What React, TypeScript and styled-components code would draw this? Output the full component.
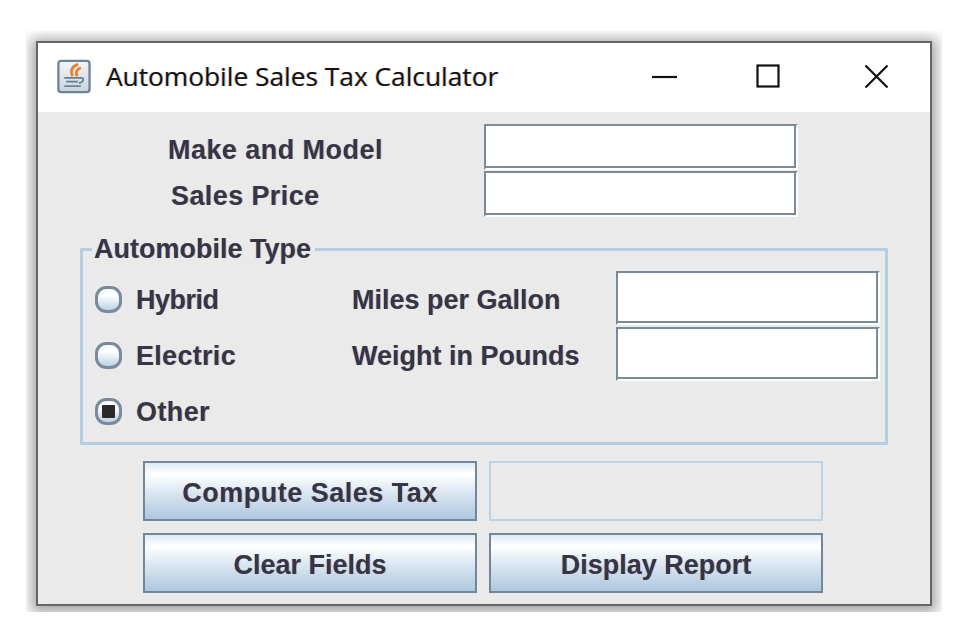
import React from 'react'
import styled, { createGlobalStyle } from 'styled-components'

const GlobalStyle = createGlobalStyle`
  html, body {
    margin: 0;
    padding: 0;
    background: #fff;
  }
`

const fringe = '-0.8px 0 rgba(230, 130, 30, 0.35), 0.8px 0 rgba(40, 90, 200, 0.35)'

const ShadowFrame = styled.div`
  box-sizing: border-box;
  width: 916px;
  height: 581px;
  margin: 31px 0 0 26px;
  padding: 10px 10px 7px 10px;
  overflow: hidden;
  background: #fff;
`

const Window = styled.div`
  box-sizing: border-box;
  width: 896px;
  height: 565px;
  display: flex;
  flex-direction: column;
  border: 2px solid #666;
  background: #eaeaea;
  box-shadow: 0 2px 12px 5px rgba(0, 0, 0, 0.34);
  font-family: 'Liberation Sans', Arial, sans-serif;
`

const TitleBar = styled.div`
  height: 69px;
  flex: none;
  display: flex;
  align-items: center;
  padding: 0 0 3px 19px;
  box-sizing: border-box;
  background: #fff;
`

const TitleText = styled.div`
  margin-left: 15px;
  width: 517px;
  font-family: 'Open Sans', sans-serif;
  font-size: 26.3px;
  color: #111;
  text-shadow: ${fringe};
  white-space: nowrap;
`

const Controls = styled.div`
  display: flex;
  margin-left: 26px;
`

const ControlButton = styled.div`
  width: 108px;
  height: 66px;
  display: flex;
  align-items: center;
  justify-content: center;
`

const Content = styled.div`
  flex: 1;
  display: flex;
  flex-direction: column;
  filter: blur(0.5px);
`

const TopForm = styled.div`
  display: grid;
  grid-template-columns: 316px 314px;
  grid-auto-rows: 46px;
  gap: 1px 0;
  padding: 12px 0 0 130px;
`

const Label = styled.label<{ $indent?: number; $spacing?: number; $drop?: number }>`
  display: flex;
  align-items: center;
  padding-left: ${props => props.$indent || 0}px;
  padding-top: ${props => props.$drop || 0}px;
  font-size: 27px;
  font-weight: 700;
  letter-spacing: ${props => props.$spacing || 0}px;
  color: #353545;
  text-shadow: ${fringe};
  white-space: nowrap;
`

const TextField = styled.input`
  box-sizing: border-box;
  width: 100%;
  height: 100%;
  margin: 0;
  padding: 0;
  outline: none;
  background: #fff;
  border-style: solid;
  border-width: 2px;
  border-color: #7a8a99 #fff #fff #7a8a99;
  box-shadow: inset -2px -2px 0 #7a8a99;
`

const Group = styled.fieldset`
  box-sizing: border-box;
  width: 808px;
  height: 211px;
  margin: 17px 0 0 42px;
  padding: 6px 0 0 12px;
  border: 3px solid #b3cde3;
  min-inline-size: auto;
`

const GroupLegend = styled.legend`
  margin-left: -3px;
  padding: 0 4px 0 2px;
  font-size: 27px;
  font-weight: 700;
  color: #353545;
  text-shadow: ${fringe};
  white-space: nowrap;
`

const GroupGrid = styled.div`
  display: grid;
  grid-template-columns: 257px 264px 264px;
  grid-auto-rows: 56px;
`

const RadioRow = styled.div`
  display: flex;
  align-items: center;
  gap: 14px;
`

const Radio = styled.span<{ $checked?: boolean }>`
  box-sizing: border-box;
  width: 27px;
  height: 27px;
  display: flex;
  align-items: center;
  justify-content: center;
  border: 3px solid #7a8a99;
  border-radius: 42%;
  background: linear-gradient(#f2f7fb, #fff 30%, #bcd2e5);
  &::after {
    content: '';
    display: ${props => (props.$checked ? 'block' : 'none')};
    width: 13px;
    height: 13px;
    background: #2a2a2a;
    border-radius: 1px;
  }
`

const FieldCell = styled.div`
  padding-bottom: 2px;
`

const ButtonGrid = styled.div`
  display: grid;
  grid-template-columns: 334px 334px;
  grid-auto-rows: 60px;
  gap: 12px;
  margin: 16px 0 0 105px;
`

const ActionButton = styled.button<{ $spacing?: number }>`
  margin: 0;
  padding: 4px 0 0;
  border: 2.5px solid #72879b;
  background: linear-gradient(#dfeaf3, #fff 20%, #d8e5f0 55%, #aec7de);
  font-family: 'Liberation Sans', Arial, sans-serif;
  font-size: 27px;
  font-weight: 700;
  letter-spacing: ${props => props.$spacing || 0}px;
  color: #353545;
  text-shadow: ${fringe};
`

const ResultBox = styled.div`
  border: 2.5px solid #bcd3e6;
`

const JavaIcon = () => (
  <svg width='37' height='37' viewBox='0 0 37 37'>
    <defs>
      <linearGradient id='javaBg' x1='0' y1='0' x2='0' y2='1'>
        <stop offset='0' stopColor='#f4f6f8' />
        <stop offset='1' stopColor='#c9d3dc' />
      </linearGradient>
    </defs>
    <rect x='1.5' y='1.5' width='34' height='34' rx='3' fill='url(#javaBg)' stroke='#6d8497' strokeWidth='2.5' />
    <path d='M23 5c-7 3-9 7-6 13M26 9c-5 2-6 5-4 9' fill='none' stroke='#e8802c' strokeWidth='3' />
    <path d='M8 20h16M10 24h13' stroke='#5f7f99' strokeWidth='2' />
    <path d='M24 20h3c2.500 0 2.500 5-3 5.500' fill='none' stroke='#5f7f99' strokeWidth='1.8' />
    <path d='M8 29h18' stroke='#5f7f99' strokeWidth='1.8' />
  </svg>
)

const MinimizeIcon = () => (
  <svg width='38' height='24' viewBox='0 0 38 24'>
    <path d='M11 13h25' stroke='#111' strokeWidth='2.2' />
  </svg>
)

const MaximizeIcon = () => (
  <svg width='24' height='24' viewBox='0 0 24 24'>
    <rect x='1.5' y='1.5' width='21' height='21' fill='none' stroke='#111' strokeWidth='2.2' />
  </svg>
)

const CloseIcon = () => (
  <svg width='25' height='25' viewBox='0 0 25 25'>
    <path d='M1.5 1.5l22 22M23.5 1.5l-22 22' stroke='#111' strokeWidth='2.2' />
  </svg>
)

const App = () => {
  return (
    <ShadowFrame>
      <GlobalStyle />
      <Window>
        <TitleBar>
          <JavaIcon />
          <TitleText>Automobile Sales Tax Calculator</TitleText>
          <Controls>
            <ControlButton>
              <MinimizeIcon />
            </ControlButton>
            <ControlButton>
              <MaximizeIcon />
            </ControlButton>
            <ControlButton>
              <CloseIcon />
            </ControlButton>
          </Controls>
        </TitleBar>
        <Content>
          <TopForm>
            <Label $drop={6} $spacing={0.45}>Make and Model</Label>
            <TextField readOnly />
            <Label $drop={4} $indent={3} $spacing={0.4}>Sales Price</Label>
            <TextField readOnly />
          </TopForm>
          <Group>
            <GroupLegend>Automobile Type</GroupLegend>
            <GroupGrid>
              <RadioRow>
                <Radio />
                <Label $drop={3} $spacing={-0.5}>Hybrid</Label>
              </RadioRow>
              <Label $drop={3}>Miles per Gallon</Label>
              <FieldCell>
                <TextField readOnly />
              </FieldCell>
              <RadioRow>
                <Radio />
                <Label $drop={3} $spacing={0.3}>Electric</Label>
              </RadioRow>
              <Label $drop={3}>Weight in Pounds</Label>
              <FieldCell>
                <TextField readOnly />
              </FieldCell>
              <RadioRow>
                <Radio $checked />
                <Label $drop={3} $spacing={0.4}>Other</Label>
              </RadioRow>
            </GroupGrid>
          </Group>
          <ButtonGrid>
            <ActionButton $spacing={0.5}>Compute Sales Tax</ActionButton>
            <ResultBox />
            <ActionButton>Clear Fields</ActionButton>
            <ActionButton>Display Report</ActionButton>
          </ButtonGrid>
        </Content>
      </Window>
    </ShadowFrame>
  )
}

export default App
